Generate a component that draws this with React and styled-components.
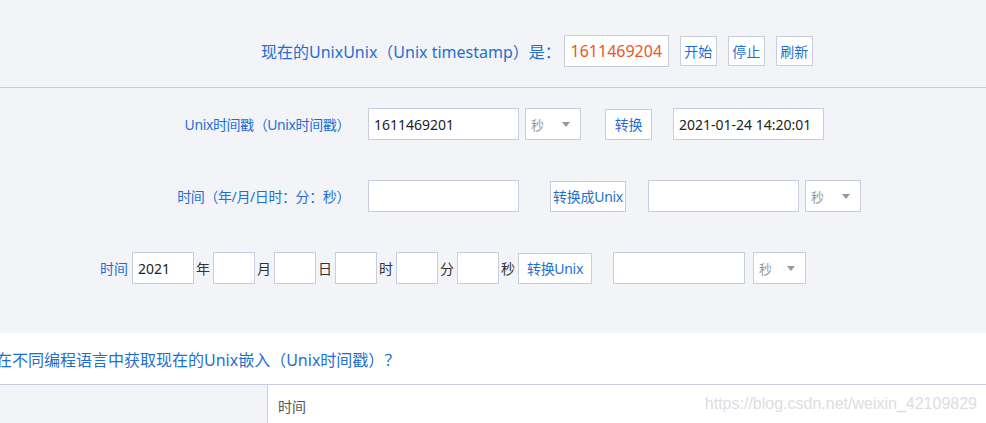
import React from 'react';
import styled, { createGlobalStyle } from 'styled-components';

const GlobalStyle = createGlobalStyle`
  body {
    margin: 0;
    background: #fff;
    font-family: "Noto Sans", "Noto Sans CJK SC", sans-serif;
    overflow: hidden;
  }
`;

const App = () => {
  return (
    <Page>
      <GlobalStyle />
      <Panel>
        <NowRow>
          <NowText>现在的UnixUnix（Unix timestamp）是：</NowText>
          <NowValue>1611469204</NowValue>
          <ButtonGroup>
            <SmallButton>开始</SmallButton>
            <SmallButton>停止</SmallButton>
            <SmallButton>刷新</SmallButton>
          </ButtonGroup>
        </NowRow>
        <Form>
          <FormRow>
            <Label>Unix时间戳（Unix时间戳）</Label>
            <Input defaultValue="1611469201" />
            <Select gap={6} />
            <ActionButton width={47} gap={24}>转换</ActionButton>
            <Input gap={21} defaultValue="2021-01-24 14:20:01" />
          </FormRow>
          <FormRow>
            <Label>时间（年/月/日时：分：秒）</Label>
            <Input />
            <ActionButton width={76} gap={31}>转换成Unix</ActionButton>
            <Input gap={22} />
            <Select gap={6} />
          </FormRow>
          <FormRow indent={100}>
            <ShortLabel>时间</ShortLabel>
            <Input width={62} gap={4} defaultValue="2021" />
            <Unit>年</Unit>
            <Input width={42} />
            <Unit>月</Unit>
            <Input width={42} />
            <Unit>日</Unit>
            <Input width={42} />
            <Unit>时</Unit>
            <Input width={42} />
            <Unit>分</Unit>
            <Input width={42} />
            <Unit>秒</Unit>
            <ActionButton width={74}>转换Unix</ActionButton>
            <Input width={132} gap={21} />
            <Select gap={8} width={53} />
          </FormRow>
        </Form>
      </Panel>
      <Section>
        <SectionTitle>在不同编程语言中获取现在的Unix嵌入（Unix时间戳）？</SectionTitle>
        <Table>
          <HeadCell />
          <Cell>时间</Cell>
        </Table>
        <Watermark>https://blog.csdn.net/weixin_42109829</Watermark>
      </Section>
    </Page>
  );
};

const Select = ({ gap, width }) => (
  <SelectBox gap={gap} width={width}>
    <span>秒</span>
    <Caret />
  </SelectBox>
);

export default App;

const Page = styled.div`
  position: relative;
  width: 986px;
  height: 423px;
  overflow: hidden;
`;

const Panel = styled.div`
  background: #f3f4f8;
  height: 333px;
`;

const NowRow = styled.div`
  height: 73px;
  padding: 14px 0 0 261px;
  display: flex;
  align-items: center;
  border-bottom: 1px solid #c8cedd;
`;

const NowText = styled.span`
  font-size: 16px;
  color: #1f6fd1;
`;

const NowValue = styled.div`
  box-sizing: border-box;
  width: 105px;
  height: 32px;
  margin-left: 3px;
  border: 1px solid #c8cedd;
  background: #fff;
  color: #f4511e;
  font-size: 16px;
  display: flex;
  align-items: center;
  justify-content: center;
`;

const ButtonGroup = styled.div`
  display: flex;
  gap: 11px;
  margin-left: 11px;
`;

const SmallButton = styled.button`
  box-sizing: border-box;
  width: 37px;
  height: 30px;
  padding: 0;
  border: 1px solid #c8cedd;
  background: #fff;
  color: #1f6fd1;
  font-family: inherit;
  font-size: 14px;
`;

const Form = styled.div`
  padding-top: 20px;
  display: flex;
  flex-direction: column;
  gap: 40px;
`;

const FormRow = styled.div`
  display: flex;
  align-items: center;
  height: 32px;
  padding-left: ${p => p.indent || 0}px;
`;

const Label = styled.div`
  width: 350px;
  text-align: right;
  font-size: 14px;
  color: #1f6fd1;
  margin-right: 18px;
  letter-spacing: -0.4px;
`;

const ShortLabel = styled.span`
  font-size: 14px;
  color: #1f6fd1;
`;

const Input = styled.input`
  box-sizing: border-box;
  width: ${p => p.width || 151}px;
  height: 32px;
  margin-left: ${p => p.gap || 0}px;
  border: 1px solid #c8cedd;
  background: #fff;
  padding: 0 5px;
  font-family: inherit;
  font-size: 14px;
  color: #222;
  outline: none;
`;

const Unit = styled.span`
  font-size: 14px;
  color: #333;
  margin: 0 3px 0 2px;
`;

const ActionButton = styled.button`
  box-sizing: border-box;
  width: ${p => p.width}px;
  height: 31px;
  margin-left: ${p => p.gap || 0}px;
  padding: 0;
  border: 1px solid #c8cedd;
  background: #fff;
  color: #1f6fd1;
  font-family: inherit;
  font-size: 14px;
  white-space: nowrap;
  letter-spacing: -0.3px;
`;

const SelectBox = styled.div`
  box-sizing: border-box;
  width: ${p => p.width || 56}px;
  height: 32px;
  margin-left: ${p => p.gap || 0}px;
  border: 1px solid #c8cedd;
  background: #fff;
  display: flex;
  align-items: center;
  justify-content: space-between;
  padding: 0 10px 0 5px;
  font-size: 13px;
  color: #999;
`;

const Caret = styled.i`
  width: 0;
  height: 0;
  border-left: 4px solid transparent;
  border-right: 4px solid transparent;
  border-top: 5px solid #999;
`;

const Section = styled.div`
  background: #fff;
`;

const SectionTitle = styled.div`
  height: 51px;
  display: flex;
  align-items: center;
  margin-left: -4px;
  font-size: 16px;
  color: #1f6fd1;
`;

const Table = styled.div`
  display: flex;
  border-top: 1px solid #c8cedd;
  height: 60px;
`;

const HeadCell = styled.div`
  width: 267px;
  background: #f3f4f8;
  border-right: 1px solid #c8cedd;
`;

const Cell = styled.div`
  padding: 11px 0 0 10px;
  font-size: 14px;
  color: #555;
`;

const Watermark = styled.div`
  position: absolute;
  right: 9px;
  top: 395px;
  font-family: "Liberation Sans", Arial, sans-serif;
  font-size: 16px;
  color: #dcdde0;
  text-shadow: 0 0 1px rgba(255, 255, 255, 0.8);
`;
